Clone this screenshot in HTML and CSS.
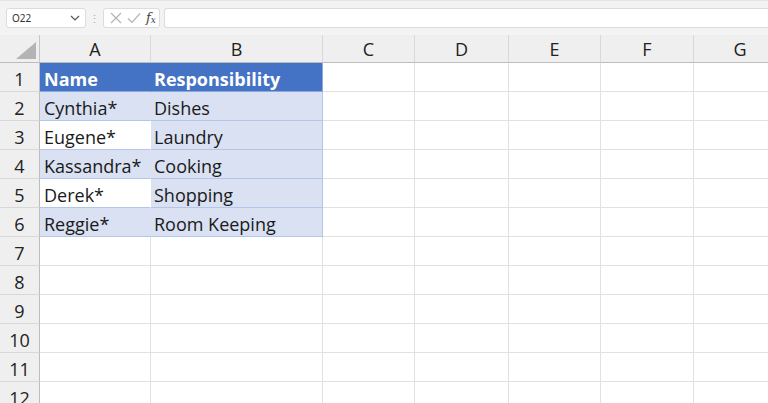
FILE: index.html
```html
<!DOCTYPE html>
<html>
<head>
<meta charset="utf-8">
<link rel="stylesheet" href="styles.css">
</head>
<body>
<div class="app">
  <div class="toolbar">
    <div class="namebox">
      <span class="nb-text">O22</span>
      <svg class="chev" width="10" height="6" viewBox="0 0 10 6"><path d="M1 1 L5 5 L9 1" fill="none" stroke="#555" stroke-width="1.2"/></svg>
    </div>
    <div class="sep">⋮</div>
    <div class="fxbox">
      <svg width="12" height="12" viewBox="0 0 12 12"><path d="M1 1 L11 11 M11 1 L1 11" stroke="#b4b4b4" stroke-width="1.2" fill="none"/></svg>
      <svg width="14" height="12" viewBox="0 0 14 12"><path d="M1 6.5 L5 10.5 L13 1.5" stroke="#b4b4b4" stroke-width="1.2" fill="none"/></svg>
      <span class="fx">f<sub>x</sub></span>
    </div>
    <div class="formula"></div>
  </div>
  <div class="sheet">
    <div class="corner"><span class="tri"></span></div>
    <div class="hd">A</div><div class="hd">B</div><div class="hd">C</div><div class="hd">D</div><div class="hd">E</div><div class="hd">F</div><div class="hd">G</div>

    <div class="rh">1</div><div class="c th">Name</div><div class="c th tr">Responsibility</div><div class="c"></div><div class="c"></div><div class="c"></div><div class="c"></div><div class="c"></div>
    <div class="rh">2</div><div class="c band ta">Cynthia*</div><div class="c band tr">Dishes</div><div class="c"></div><div class="c"></div><div class="c"></div><div class="c"></div><div class="c"></div>
    <div class="rh">3</div><div class="c tw ta">Eugene*</div><div class="c band tr">Laundry</div><div class="c"></div><div class="c"></div><div class="c"></div><div class="c"></div><div class="c"></div>
    <div class="rh">4</div><div class="c band ta">Kassandra*</div><div class="c band tr">Cooking</div><div class="c"></div><div class="c"></div><div class="c"></div><div class="c"></div><div class="c"></div>
    <div class="rh">5</div><div class="c tw ta">Derek*</div><div class="c band tr">Shopping</div><div class="c"></div><div class="c"></div><div class="c"></div><div class="c"></div><div class="c"></div>
    <div class="rh">6</div><div class="c band ta">Reggie*</div><div class="c band tr">Room Keeping</div><div class="c"></div><div class="c"></div><div class="c"></div><div class="c"></div><div class="c"></div>
    <div class="rh">7</div><div class="c"></div><div class="c"></div><div class="c"></div><div class="c"></div><div class="c"></div><div class="c"></div><div class="c"></div>
    <div class="rh">8</div><div class="c"></div><div class="c"></div><div class="c"></div><div class="c"></div><div class="c"></div><div class="c"></div><div class="c"></div>
    <div class="rh">9</div><div class="c"></div><div class="c"></div><div class="c"></div><div class="c"></div><div class="c"></div><div class="c"></div><div class="c"></div>
    <div class="rh">10</div><div class="c"></div><div class="c"></div><div class="c"></div><div class="c"></div><div class="c"></div><div class="c"></div><div class="c"></div>
    <div class="rh">11</div><div class="c"></div><div class="c"></div><div class="c"></div><div class="c"></div><div class="c"></div><div class="c"></div><div class="c"></div>
    <div class="rh">12</div><div class="c"></div><div class="c"></div><div class="c"></div><div class="c"></div><div class="c"></div><div class="c"></div><div class="c"></div>
  </div>
</div>
</body>
</html>
```
FILE: styles.css
```css
* { box-sizing: border-box; }
html, body { margin: 0; padding: 0; }
body {
  width: 768px;
  height: 403px;
  overflow: hidden;
  background: #fff;
  font-family: "Open Sans", "Noto Sans", sans-serif;
  color: #1f1f1f;
}
.app { width: 768px; height: 403px; overflow: hidden; }

.toolbar {
  height: 35px;
  background: #f3f3f3;
  border-top: 1px solid #e4e4e4;
  display: flex;
  align-items: center;
  padding: 0 0 0 6px;
  gap: 0;
}
.namebox {
  width: 80px;
  height: 20px;
  background: #fff;
  border: 1px solid #dcdcdc;
  border-radius: 3px;
  display: flex;
  align-items: center;
  justify-content: space-between;
  padding: 0 5px 0 5px;
}
.nb-text { font-size: 10px; color: #333; font-family: "Noto Sans", sans-serif; }
.sep { width: 17px; text-align: center; color: #a8a8a8; font-size: 11px; line-height: 1; }
.fxbox {
  width: 57px;
  height: 20px;
  background: #fff;
  border: 1px solid #dcdcdc;
  border-radius: 3px;
  display: flex;
  align-items: center;
  gap: 5px;
  padding-left: 6px;
}
.fx {
  font-family: "DejaVu Serif", "Liberation Serif", serif;
  font-style: italic;
  font-size: 13px;
  color: #444;
  line-height: 1;
}
.fx sub { font-size: 9px; vertical-align: -1px; }
.formula {
  flex: 1;
  height: 20px;
  margin-left: 4px;
  background: #fff;
  border: 1px solid #dcdcdc;
  border-right: none;
  border-radius: 3px 0 0 3px;
}

.sheet {
  display: grid;
  grid-template-columns: 40px 111px 172px 92px 94px 92px 93px 93px;
  grid-template-rows: 28px;
  grid-auto-rows: 29px;
  font-size: 18px;
}
.corner, .hd, .rh {
  background: #efefef;
  color: #222;
}
.corner {
  border-right: 1px solid #c6c6c6;
  border-bottom: 1px solid #bdbdbd;
  position: relative;
}
.tri {
  position: absolute;
  right: 3px;
  bottom: 3px;
  width: 0;
  height: 0;
  border-left: 20px solid transparent;
  border-bottom: 17px solid #b4b4b4;
}
.hd {
  border-right: 1px solid #d8d8d8;
  border-bottom: 1px solid #bdbdbd;
  display: flex;
  align-items: center;
  justify-content: center;
  padding-top: 1px;
}
.rh {
  border-right: 1px solid #bdbdbd;
  border-bottom: 1px solid #d8d8d8;
  display: flex;
  align-items: flex-end;
  justify-content: center;
  padding-bottom: 0;
  line-height: 24px;
}
.c {
  border-right: 1px solid #e1e1e1;
  border-bottom: 1px solid #e1e1e1;
  display: flex;
  align-items: flex-end;
  padding: 0 0 0 4px;
  white-space: nowrap;
  line-height: 24px;
  color: #1a1a1a;
}
.th {
  background: #4472c4;
  color: #fff;
  font-weight: 700;
  border-right-color: #4472c4;
  border-bottom-color: #8ea9db;
}
.band { background: #d9e1f2; border-bottom-color: #b4c6e7; }
.tw { background: #fff; border-bottom-color: #b4c6e7; }
.ta { border-right-color: transparent; }
.tr { border-right-color: #b4c6e7; padding-left: 3px; }
.th.tr { border-right-color: #8ea9db; }
```
